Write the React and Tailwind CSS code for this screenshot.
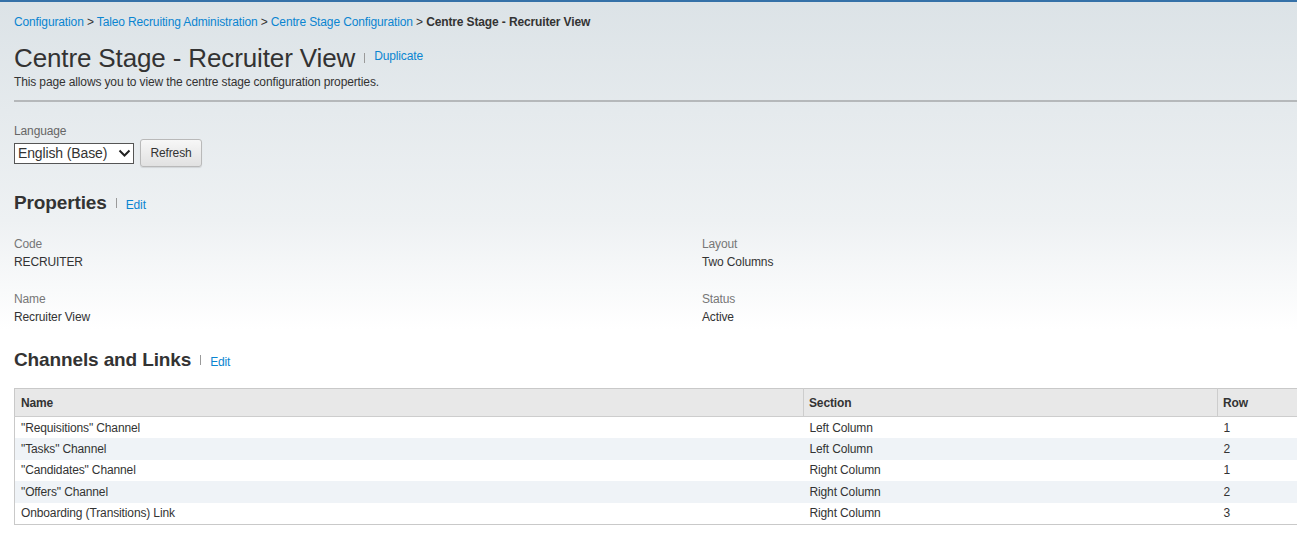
const rows = [
  { name: '"Requisitions" Channel', section: 'Left Column', row: 1 },
  { name: '"Tasks" Channel', section: 'Left Column', row: 2 },
  { name: '"Candidates" Channel', section: 'Right Column', row: 1 },
  { name: '"Offers" Channel', section: 'Right Column', row: 2 },
  { name: 'Onboarding (Transitions) Link', section: 'Right Column', row: 3 }
];

const Sep = () => <span className="mx-[9px] inline-block h-[10px] w-px bg-[#9a9a9a]" />;

const Field = ({ label, value }) => (
  <div className="h-[55px]">
    <p className="text-[12px] leading-[14px] text-[#777]">{label}</p>
    <p className="mt-1 text-[12px] leading-[14px] text-[#333]">{value}</p>
  </div>
);

export default function App() {
  return (
    <div
      className="min-h-[548px] w-full overflow-hidden border-t-2 border-[#3571a8] bg-gradient-to-b from-[#dce3e7] via-[#eef1f3] via-40% to-white to-60% tracking-[-0.13px] text-[#333]"
      style={{ fontFamily: '"Liberation Sans", Arial, sans-serif' }}
    >
      <div className="w-[1390px] pl-[14px]">
        <nav className="pt-[13px] text-[12px] leading-[14px]">
          <a className="text-[#0a85d1]">Configuration</a>
          <span> &gt; </span>
          <a className="text-[#0a85d1]">Taleo Recruiting Administration</a>
          <span> &gt; </span>
          <a className="text-[#0a85d1]">Centre Stage Configuration</a>
          <span> &gt; </span>
          <span className="font-bold text-[#333]">Centre Stage - Recruiter View</span>
        </nav>

        <div className="mt-[14px] flex items-center">
          <h1 className="text-[26px] leading-[30px] text-[#333]">Centre Stage - Recruiter View</h1>
          <Sep />
          <a className="mb-[4px] text-[12px] text-[#0a85d1]">Duplicate</a>
        </div>
        <p className="mt-[2px] text-[12px] leading-[14px] text-[#333]">
          This page allows you to view the centre stage configuration properties.
        </p>
        <div className="mt-[11px] h-[2px] bg-[#b5b8ba]" />

        <p className="mt-[22px] text-[12px] leading-[14px] text-[#666]">Language</p>
        <div className="mt-[1px] flex items-center gap-[6px]">
          <div className="flex h-[21px] w-[120px] items-center justify-between border border-[#555] bg-white pl-[3px] pr-[2px] text-[14px]">
            <span>English (Base)</span>
            <svg width="13" height="9" viewBox="0 0 13 9">
              <path d="M1.5 1.5 L6.5 6.5 L11.5 1.5" fill="none" stroke="#222" strokeWidth="2" />
            </svg>
          </div>
          <button className="h-[28px] w-[62px] rounded-[3px] border border-[#b9b9b9] bg-gradient-to-b from-[#f7f7f7] to-[#e1e1e1] text-[12px] text-[#333] shadow-[0_1px_1px_rgba(0,0,0,0.1)]">
            Refresh
          </button>
        </div>

        <div className="mt-[24px] flex items-center">
          <h2 className="text-[19px] font-bold leading-[24px] text-[#333]">Properties</h2>
          <Sep />
          <a className="mt-[3px] text-[12px] text-[#0a85d1]">Edit</a>
        </div>

        <div className="mt-[22px] grid grid-cols-2">
          <div>
            <Field label="Code" value="RECRUITER" />
            <Field label="Name" value="Recruiter View" />
          </div>
          <div>
            <Field label="Layout" value="Two Columns" />
            <Field label="Status" value="Active" />
          </div>
        </div>

        <div className="mt-[1px] flex items-center">
          <h2 className="text-[19px] font-bold leading-[24px] text-[#333]">Channels and Links</h2>
          <Sep />
          <a className="mt-[3px] text-[12px] text-[#0a85d1]">Edit</a>
        </div>

        <table className="mt-[16px] w-[1376px] border-collapse border border-[#c9c9c9] text-[12px]">
          <thead>
            <tr className="h-[28px] bg-[#e8e8e8] text-left">
              <th className="w-[789px] border-b border-r border-[#cdcdcd] pl-[6px] font-bold">Name</th>
              <th className="w-[414px] border-b border-r border-[#cdcdcd] pl-[5px] font-bold">Section</th>
              <th className="border-b border-[#cdcdcd] pl-[5px] font-bold">Row</th>
            </tr>
          </thead>
          <tbody>
            {rows.map((r, i) => (
              <tr key={r.name} className={i % 2 === 1 ? 'h-[21.5px] bg-[#eff3f7]' : 'h-[21.5px] bg-white'}>
                <td className="pl-[6px]">{r.name}</td>
                <td className="pl-[6px]">{r.section}</td>
                <td className="pl-[6px]">{r.row}</td>
              </tr>
            ))}
          </tbody>
        </table>
      </div>
    </div>
  );
}
